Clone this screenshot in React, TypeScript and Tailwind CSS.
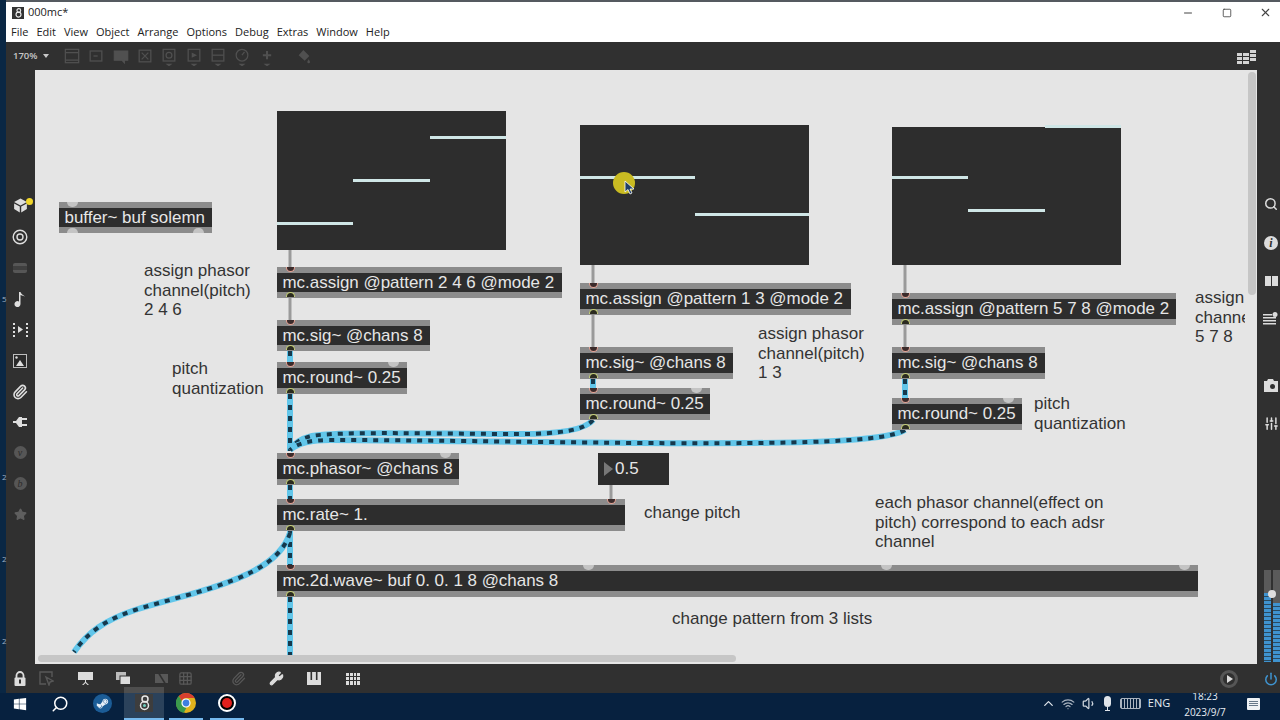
import React from "react";
import {
  ChevronUp,
  Grid3x3,
  Minus,
  Paperclip,
  Power,
  Search,
  SlidersVertical,
  Square,
  Star,
  Volume1,
  Wifi,
  Wrench,
  X,
} from "lucide-react";
import { FaSteamSymbol, FaWindows } from "react-icons/fa";

const sans = "font-['Liberation_Sans',Arial,sans-serif]";

// patcher box with inlet / outlet bars
function Box({
  pos,
  text,
  inlet = true,
  outlet = true,
  bumps,
}: {
  pos: string;
  text: string;
  inlet?: boolean;
  outlet?: boolean;
  bumps?: React.ReactNode;
}) {
  return (
    <div className={`absolute ${pos} flex flex-col bg-[#8c8c8c]`}>
      <div className="h-[6px] shrink-0" />
      <div className="flex-1 bg-[#2d2d2d] pl-[5.5px] text-[16.95px] leading-[19px] whitespace-nowrap text-[#e6e6e6]">
        {text}
      </div>
      <div className="h-[6px] shrink-0" />
      {inlet && (
        <div className="absolute left-[9px] top-0 h-[5px] w-[9px] rounded-b-full border border-t-0 border-[#e6a496] bg-[#3b2b2b]" />
      )}
      {outlet && (
        <div className="absolute bottom-px left-[9px] h-[5px] w-[9px] rounded-t-full border border-b-0 border-[#c5cf78] bg-[#2b2b20]" />
      )}
      {bumps}
    </div>
  );
}

function Note({ pos, lines }: { pos: string; lines: string[] }) {
  return (
    <div className={`absolute ${pos} overflow-hidden text-[17px] leading-[19.5px] whitespace-nowrap text-[#333333]`}>
      {lines.map((l) => (
        <div key={l}>{l}</div>
      ))}
    </div>
  );
}

function Level({ pos }: { pos: string }) {
  return <div className={`absolute h-[3px] bg-[#cfe6e6] ${pos}`} />;
}

function Panel({ pos, children }: { pos: string; children: React.ReactNode }) {
  return <div className={`absolute bg-[#2d2d2d] ${pos}`}>{children}</div>;
}

const grayCords = [
  "M290 250V267",
  "M290 298V320",
  "M593 265V283",
  "M593 315V347",
  "M905 265V293",
  "M905 325V347",
  "M611 485V499",
];

const mcCords = [
  "M290 351V362",
  "M290 394V451",
  "M593 379V388",
  "M905 379V398",
  "M290 485V499",
  "M290 531V565",
  "M290 597V655",
  "M593 420C585 430 560 434 520 434C440 434 340 431 312 436C300 439 294 443 290 450",
  "M905 430C885 442 800 444 640 443C520 442 420 440 330 440C310 440 298 443 290 450",
  "M290 533C276 578 200 590 135 610C105 620 88 632 74 652",
];

function Cords() {
  return (
    <svg className="absolute inset-0" width="1222" height="594" viewBox="35 70 1222 594" fill="none">
      {grayCords.map((d) => (
        <path key={d} d={d} stroke="#9a9a9a" strokeWidth="3" />
      ))}
      {mcCords.map((d) => (
        <g key={d}>
          <path d={d} stroke="#62c6ea" strokeWidth="6" />
          <path d={d} stroke="#16384c" strokeWidth="4" strokeDasharray="5 6" />
        </g>
      ))}
    </svg>
  );
}

function Canvas() {
  const bump = "absolute h-[5px] w-[11px] bg-[#c4c4c4]";
  return (
    <div className={`relative flex-1 overflow-hidden bg-[#e5e5e5] ${sans}`}>
      <Cords />

      <Box
        pos="left-[24px] top-[132px] w-[153px] h-[31px]"
        text="buffer~ buf solemn"
        inlet={false}
        outlet={false}
        bumps={
          <>
            <div className={`${bump} left-[8px] top-0 rounded-b-full`} />
            <div className={`${bump} bottom-0 left-[8px] rounded-t-full`} />
            <div className={`${bump} bottom-0 left-[134px] rounded-t-full`} />
          </>
        }
      />

      <Panel pos="left-[242px] top-[41px] h-[139px] w-[229px]">
        <Level pos="left-[153px] top-[25px] w-[76px]" />
        <Level pos="left-[76px] top-[68px] w-[77px]" />
        <Level pos="left-0 top-[111px] w-[76px]" />
      </Panel>
      <Panel pos="left-[545px] top-[55px] h-[140px] w-[229px]">
        <Level pos="left-0 top-[51px] w-[115px]" />
        <Level pos="left-[115px] top-[88px] w-[114px]" />
      </Panel>
      <Panel pos="left-[857px] top-[57px] h-[138px] w-[229px]">
        <Level pos="left-0 top-[49px] w-[76px]" />
        <Level pos="left-[76px] top-[82px] w-[77px]" />
        <Level pos="left-[153px] top-[-2px] w-[76px]" />
      </Panel>

      <Box pos="left-[242px] top-[197px] w-[285px] h-[31px]" text="mc.assign @pattern 2 4 6 @mode 2" />
      <Box pos="left-[242px] top-[250px] w-[153px] h-[31px]" text="mc.sig~ @chans 8" />
      <Box
        pos="left-[242px] top-[292px] w-[130px] h-[32px]"
        text="mc.round~ 0.25"
        bumps={<div className={`${bump} left-[111px] top-0 rounded-b-full`} />}
      />

      <Box pos="left-[545px] top-[213px] w-[271px] h-[32px]" text="mc.assign @pattern 1 3 @mode 2" />
      <Box pos="left-[545px] top-[277px] w-[153px] h-[32px]" text="mc.sig~ @chans 8" />
      <Box
        pos="left-[545px] top-[318px] w-[130px] h-[32px]"
        text="mc.round~ 0.25"
        bumps={<div className={`${bump} left-[111px] top-0 rounded-b-full`} />}
      />

      <Box pos="left-[857px] top-[223px] w-[284px] h-[32px]" text="mc.assign @pattern 5 7 8 @mode 2" />
      <Box pos="left-[857px] top-[277px] w-[153px] h-[32px]" text="mc.sig~ @chans 8" />
      <Box
        pos="left-[857px] top-[328px] w-[130px] h-[32px]"
        text="mc.round~ 0.25"
        bumps={<div className={`${bump} left-[111px] top-0 rounded-b-full`} />}
      />

      <Box
        pos="left-[242px] top-[383px] w-[182px] h-[32px]"
        text="mc.phasor~ @chans 8"
        bumps={<div className={`${bump} left-[163px] top-0 rounded-b-full`} />}
      />

      <div className="absolute left-[563px] top-[383px] flex h-[32px] w-[71px] items-center gap-[2px] bg-[#2d2d2d] pl-[6px] text-[17px] text-[#e6e6e6]">
        <div className="h-0 w-0 border-y-[7px] border-l-[9px] border-y-transparent border-l-[#777777]" />
        0.5
      </div>

      <Box
        pos="left-[242px] top-[429px] w-[348px] h-[32px]"
        text="mc.rate~ 1."
        bumps={
          <div className="absolute left-[330px] top-0 h-[5px] w-[9px] rounded-b-full border border-t-0 border-[#e6a496] bg-[#3b2b2b]" />
        }
      />
      <Box
        pos="left-[242px] top-[495px] w-[921px] h-[32px]"
        text="mc.2d.wave~ buf 0. 0. 1 8 @chans 8"
        bumps={
          <>
            <div className={`${bump} left-[306px] top-0 rounded-b-full`} />
            <div className={`${bump} left-[604px] top-0 rounded-b-full`} />
            <div className={`${bump} left-[902px] top-0 rounded-b-full`} />
          </>
        }
      />

      <Note pos="left-[109px] top-[191px]" lines={["assign phasor", "channel(pitch)", "2 4 6"]} />
      <Note pos="left-[137px] top-[289px]" lines={["pitch", "quantization"]} />
      <Note pos="left-[723px] top-[254px]" lines={["assign phasor", "channel(pitch)", "1 3"]} />
      <Note pos="left-[999px] top-[324px]" lines={["pitch", "quantization"]} />
      <Note
        pos="left-[840px] top-[423px]"
        lines={["each phasor channel(effect on", "pitch) correspond to each adsr", "channel"]}
      />
      <Note pos="left-[609px] top-[433px]" lines={["change pitch"]} />
      <Note pos="left-[637px] top-[539px]" lines={["change pattern from 3 lists"]} />
      <Note pos="left-[1160px] top-[218px] w-[50px]" lines={["assign phasor", "channel(pitch)", "5 7 8"]} />

      {/* mouse highlight */}
      <div className="absolute left-[578px] top-[102px] h-[22px] w-[22px] rounded-full bg-[#c9bb22]" />
      <svg className="absolute left-[589px] top-[110px]" width="11" height="16" viewBox="0 0 11 16">
        <path d="M1 1v11l3-2.500 2 4.500 2-1-2-4h4z" fill="#1f3f66" stroke="#ffffff" strokeWidth="0.8" />
      </svg>

      {/* scrollbars */}
      <div className="absolute right-[1px] top-[2px] h-[223px] w-[8px] rounded-full bg-[#c6c6c6]" />
      <div className="absolute bottom-[2px] left-[3px] h-[7px] w-[698px] rounded-full bg-[#c6c6c6]" />
    </div>
  );
}

function TopToolbar() {
  const dim = "#505050";
  const icons = [
    <g key="a"><rect x="4" y="4" width="16" height="16" /><path d="M4 8h16M4 17h16" /></g>,
    <g key="b"><rect x="5" y="6" width="14" height="12" /><path d="M9 12h5" /></g>,
    <path key="c" d="M4 6h16v11h-4v3l-3-3H4z" fill={dim} />,
    <g key="d"><rect x="5" y="5" width="14" height="14" /><path d="M8 8l8 8M16 8l-8 8" /></g>,
    <g key="e"><rect x="5" y="4" width="14" height="14" /><circle cx="12" cy="11" r="3.500" /><path d="M10 22h4l-2 1.500z" fill={dim} /></g>,
    <g key="f"><rect x="5" y="4" width="14" height="14" /><path d="M10 9l4 2-4 2z" fill={dim} /><path d="M10 22h4l-2 1.500z" fill={dim} /></g>,
    <g key="g"><rect x="5" y="4" width="14" height="14" /><path d="M5 11h14" /><path d="M10 22h4l-2 1.500z" fill={dim} /></g>,
    <g key="h"><circle cx="12" cy="11" r="7" /><path d="M12 11l3-4" /><path d="M10 22h4l-2 1.500z" fill={dim} /></g>,
    <g key="i"><path d="M12 6v10M7 11h10" strokeWidth="2.500" /><path d="M10 22h4l-2 1.500z" fill={dim} /></g>,
  ];
  return (
    <div className="flex h-[28px] shrink-0 items-center bg-[#303030]">
      <div className="flex w-[54px] items-center gap-[5px] pl-[7px] font-['Open_Sans',sans-serif] text-[9.5px] font-semibold text-[#c8c8c8]">
        170%
        <div className="h-0 w-0 border-x-[3px] border-t-[4px] border-x-transparent border-t-[#c8c8c8]" />
      </div>
      {icons.map((ic, i) => (
        <div key={i} className="flex w-[24.3px] justify-center">
          <svg width="20" height="20" viewBox="0 0 24 24" fill="none" stroke={dim} strokeWidth="1.500">
            {ic}
          </svg>
        </div>
      ))}
      <svg className="ml-[17px]" width="16" height="16" viewBox="0 0 24 24" fill={dim}>
        <path d="M11 3l9 9-7 7-9-8zM19 17c1 2 2 3 2 4a2 2 0 0 1-4 0c0-1 1-2 2-4z" />
      </svg>
      <svg className="ml-auto mr-[24px]" width="19" height="15" viewBox="0 0 19 15" fill="#d4d4d4">
        <path d="M0 4h5v3H0zM6 4h6v3H6zM13 1h6v3h-6zM13 5h6v3h-6zM0 8h5v3H0zM6 8h6v3H6zM13 9h6v3h-6zM0 12h5v3H0zM6 12h6v3H6z" />
      </svg>
    </div>
  );
}

function LeftBar() {
  const on = "#dedede";
  const off = "#5f5f5f";
  return (
    <div className="flex w-[29px] shrink-0 flex-col items-center bg-[#303030] pt-[120px] pr-px">
      <div className="relative flex h-[31px] items-center">
        <svg width="17" height="17" viewBox="0 0 24 24" fill={on}>
          <path d="M12 2l9 5-9 5-9-5zM3 9l8 4.500V22l-8-5zM21 9l-8 4.500V22l8-5z" />
        </svg>
        <div className="absolute right-[-4px] top-[8px] h-[7px] w-[7px] rounded-full bg-[#f0d52a]" />
      </div>
      <div className="flex h-[31px] items-center">
        <svg width="16" height="16" viewBox="0 0 16 16" fill="none" stroke={on}>
          <circle cx="8" cy="8" r="6.800" strokeWidth="1.400" />
          <circle cx="8" cy="8" r="3" strokeWidth="1.400" />
        </svg>
      </div>
      <div className="flex h-[31px] items-center">
        <div className="h-[10px] w-[14px] rounded-[2px] border-y-[3px] border-[#565656] bg-[#3f3f3f]" />
      </div>
      <div className="flex h-[31px] items-center">
        <svg width="14" height="16" viewBox="0 0 14 16" fill={on}>
          <path d="M6 1h1.500c.3 2 3 3 4.500 4.500-1.500-.7-3-1-4.500-1.500V13a3 3 0 1 1-1.500-2.500z" />
        </svg>
      </div>
      <div className="flex h-[31px] items-center">
        <svg width="15" height="15" viewBox="0 0 15 15" fill={on}>
          <path d="M5 4l5 3.500L5 11z" />
          <path d="M0 1h2v2H0zM0 5h2v2H0zM0 9h2v2H0zM0 13h2v2H0zM13 1h2v2h-2zM13 5h2v2h-2zM13 9h2v2h-2zM13 13h2v2h-2z" />
        </svg>
      </div>
      <div className="flex h-[31px] items-center">
        <svg width="14" height="14" viewBox="0 0 14 14">
          <rect x="0.500" y="0.500" width="13" height="13" fill="#2a2a2a" stroke="#bdbdbd" />
          <path d="M3 12l4-6 4 6z" fill={on} />
          <circle cx="3.500" cy="3.500" r="1.200" fill={on} />
        </svg>
      </div>
      <div className="flex h-[31px] items-center">
        <Paperclip size={16} color={on} strokeWidth={2.4} />
      </div>
      <div className="flex h-[30px] items-center">
        <svg width="15" height="14" viewBox="0 0 15 14" fill={on}>
          <path d="M0 6h3l3-4h3v10H6L3 8H0z" />
          <path d="M9 3h5v2H9zM9 9h5v2H9z" />
        </svg>
      </div>
      <div className="flex h-[31px] items-center">
        <div className="flex h-[13px] w-[13px] items-center justify-center rounded-full bg-[#565656] font-['Liberation_Serif',serif] text-[10px] italic leading-none text-[#2b2b2b]">
          v
        </div>
      </div>
      <div className="flex h-[31px] items-center">
        <div className="flex h-[13px] w-[13px] items-center justify-center rounded-full bg-[#565656] font-['Liberation_Serif',serif] text-[10px] italic leading-none text-[#2b2b2b]">
          b
        </div>
      </div>
      <div className="flex h-[31px] items-center">
        <Star size={13} color={off} fill={off} />
      </div>
    </div>
  );
}

function RightBar() {
  const on = "#dcdcdc";
  return (
    <div className="relative flex w-[23px] shrink-0 flex-col items-center bg-[#303030] pt-[126px] pl-[5px]">
      <Search size={14} color={on} strokeWidth={2.6} className="mt-[1px]" />
      <div className="mt-[25px] flex h-[14px] w-[14px] items-center justify-center rounded-full bg-[#dcdcdc] font-['Liberation_Serif',serif] text-[12px] font-bold italic leading-none text-[#303030]">
        i
      </div>
      <div className="mt-[26px] flex gap-[1px]">
        <div className="h-[10px] w-[6px] bg-[#dcdcdc]" />
        <div className="h-[10px] w-[6px] bg-[#dcdcdc]" />
      </div>
      <svg className="mt-[26px]" width="16" height="14" viewBox="0 0 16 14" fill={on}>
        <path d="M0 2h9v1.500H0zM0 5h13v1.500H0zM0 8h13v1.500H0zM0 11h13v1.500H0z" />
        <circle cx="12" cy="2.500" r="2.500" />
      </svg>
      <svg className="mt-[53px]" width="14" height="13" viewBox="0 0 14 13">
        <path d="M0 2h3l1-2h5l1 2h4v11H0z" fill={on} />
        <circle cx="8.500" cy="7.500" r="2.500" fill="#303030" />
      </svg>
      <SlidersVertical size={15} color={on} strokeWidth={2.4} className="mt-[24px]" />

      {/* output meters */}
      <div className="absolute bottom-[2px] left-[7px] flex h-[92px] gap-[2px]">
        <div className="flex w-[7px] flex-col bg-[#5a5a5a]">
          <div className="mt-[23px] h-[69px] bg-[repeating-linear-gradient(#3f93cf_0_3px,#2a4a60_3px_4px)]" />
        </div>
        <div className="flex w-[7px] flex-col bg-[#5a5a5a]">
          <div className="mt-[33px] h-[59px] bg-[repeating-linear-gradient(#3f93cf_0_3px,#2a4a60_3px_4px)]" />
        </div>
      </div>
      <div className="absolute bottom-[66px] left-[11px] h-[8px] w-[8px] rounded-full bg-[#dedede]" />
    </div>
  );
}

function BottomToolbar() {
  const on = "#dcdcdc";
  const off = "#585858";
  return (
    <div className="flex h-[29px] shrink-0 items-center bg-[#303030] pl-[7px]">
      <svg width="14" height="15" viewBox="0 0 14 15">
        <path d="M3.500 7V4.500a3.500 3.500 0 0 1 7 0V7" fill="none" stroke={on} strokeWidth="1.800" />
        <rect x="1.500" y="6.500" width="11" height="8.500" rx="1" fill={on} />
        <rect x="6" y="8.500" width="2" height="4" fill="#303030" />
      </svg>
      <svg className="ml-[12px]" width="15" height="15" viewBox="0 0 15 15" fill="none" stroke={off} strokeWidth="1.400">
        <path d="M13 6V1H1v12h6M7 6l7 4-3 1-1 3z" />
      </svg>
      <svg className="ml-[24px]" width="15" height="15" viewBox="0 0 15 15" fill={on}>
        <path d="M0 1h15v8H0zM7 9h1v2l3 3h-1.500L7.500 12 5.500 14H4l3-3z" />
      </svg>
      <svg className="ml-[23px]" width="15" height="13" viewBox="0 0 15 13">
        <rect x="0" y="0" width="10" height="8" fill="#bcbcbc" />
        <rect x="4" y="4" width="10.500" height="8.500" fill={on} stroke="#303030" />
      </svg>
      <svg className="ml-[23px]" width="15" height="15" viewBox="0 0 15 15" fill={off}>
        <path d="M1 3h13v9H1z" />
        <path d="M4 1l8 13" stroke="#303030" strokeWidth="1.500" />
      </svg>
      <Grid3x3 size={15} color={off} className="ml-[9px]" />
      <Paperclip size={15} color={off} className="ml-[38px]" />
      <Wrench size={15} color={on} fill={on} className="ml-[23px]" />
      <svg className="ml-[23px]" width="14" height="13" viewBox="0 0 14 13" fill={on}>
        <path d="M0 0h14v13H0z" />
        <path d="M3.500 0h1.600v8H3.500zM8.900 0h1.600v8H8.900z" fill="#303030" />
      </svg>
      <div className="ml-[25px] grid h-[12px] w-[14px] grid-cols-4 gap-[1px]">
        {[0, 1, 2, 3, 4, 5, 6, 7, 8, 9, 10, 11].map((i) => (
          <div key={i} className="bg-[#dcdcdc]" />
        ))}
      </div>
      <div className="ml-auto flex items-center gap-[26px] pr-[2px]">
        <div className="flex h-[18px] w-[18px] items-center justify-center rounded-full border-[3px] border-[#565656]">
          <div className="ml-px h-0 w-0 border-y-[4px] border-l-[6px] border-y-transparent border-l-[#dcdcdc]" />
        </div>
        <Power size={14} color="#3f93cf" strokeWidth={2.6} />
      </div>
    </div>
  );
}

function Taskbar() {
  const tile = "flex h-[27px] items-center justify-center pb-[6px]";
  return (
    <div className="flex h-[27px] shrink-0 items-center bg-[#07213f] font-['Open_Sans',sans-serif] text-[#e8edf2]">
      <div className={`${tile} w-[40px]`}>
        <FaWindows size={14} color="#ffffff" />
      </div>
      <div className={`${tile} w-[40px]`}>
        <Search size={18} color="#ffffff" strokeWidth={2} className="-scale-x-100" />
      </div>
      <div className={`${tile} w-[44px]`}>
        <div className="flex h-[19px] w-[19px] items-center justify-center rounded-full bg-[#1b5c96]">
          <FaSteamSymbol size={13} color="#e8f0f8" />
        </div>
      </div>
      {/* active app tile runs up over the window */}
      <div className="relative -mt-[6px] flex h-[33px] w-[40px] items-start justify-center border-b-2 border-[#76b9ed] bg-white/15 pt-[7px]">
        <div className="flex h-[18px] w-[18px] items-center justify-center bg-[#3d3d3d]">
          <svg width="11" height="16" viewBox="0 0 11 16" fill="none" stroke="#e8e8e8" strokeWidth="1.500">
            <circle cx="5.500" cy="10.500" r="4" />
            <circle cx="6" cy="4" r="3" />
            <circle cx="5.500" cy="10.500" r="1.500" fill="#6fd0c0" stroke="none" />
          </svg>
        </div>
      </div>
      <div className={`${tile} ml-[5px] w-[34px] border-b-2 border-[#76b9ed]`}>
        <svg width="20" height="20" viewBox="0 0 20 20">
          <circle cx="10" cy="10" r="10" fill="#e0b21c" />
          <path d="M10 0a10 10 0 0 1 8.700 5H10a5 5 0 0 0-4.500 2.700L2.800 3A10 10 0 0 1 10 0z" fill="#d8402f" />
          <path d="M2.800 3l4 7a5 5 0 0 0 3.500 5l-2.500 4.800A10 10 0 0 1 2.800 3z" fill="#3a9a4c" />
          <circle cx="10" cy="10" r="4" fill="#3f7fe0" stroke="#ffffff" strokeWidth="1.200" />
        </svg>
      </div>
      <div className={`${tile} ml-[7px] w-[34px] border-b-2 border-[#76b9ed]`}>
        <div className="flex h-[18px] w-[18px] items-center justify-center rounded-full border-2 border-white bg-black">
          <div className="h-[10px] w-[10px] rounded-full bg-[#e0201c]" />
        </div>
      </div>

      <div className="ml-auto flex items-center pb-[6px]">
        <ChevronUp size={15} color="#e0e6ec" className="mr-[5px]" />
        <Wifi size={14} color="#aab4c0" className="mr-[7px]" />
        <Volume1 size={15} color="#cfd6de" className="mr-[6px]" />
        <svg className="mr-[8px]" width="9" height="16" viewBox="0 0 9 16" fill="#dfe4ea">
          <rect x="1" y="0" width="7" height="11" rx="3.500" />
          <path d="M4 11h1v3h2v1H2v-1h2z" />
        </svg>
        <div className="mr-[3px] h-[11px] w-[21px] rounded-[2px] border border-[#aab4c0] bg-[repeating-linear-gradient(90deg,#aab4c0_0_1px,transparent_1px_3px)]" />
        <div className="w-[30px] text-center text-[11px]">ENG</div>
        <div className="mr-[11px] flex w-[62px] flex-col items-center text-[10px] leading-[16px]">
          <div>18:23</div>
          <div>2023/9/7</div>
        </div>
        <div className="mr-[20px] flex h-[12px] w-[13px] flex-col justify-center gap-px rounded-[1px] bg-[#eef1f4] px-[2px]">
          <div className="h-px bg-[#667788]" />
          <div className="h-px bg-[#667788]" />
          <div className="h-px bg-[#667788]" />
        </div>
      </div>
    </div>
  );
}

export default function App() {
  return (
    <div className="flex h-[720px] w-[1280px] flex-col overflow-hidden bg-[#07213f]">
      <div className="relative flex min-h-0 flex-1">
        {/* sliver of the desktop behind the window */}
        <div className="relative w-[6px] shrink-0 bg-[#0a2744] font-['Open_Sans',sans-serif] text-[8px] leading-none text-[#9fb0c2]">
          <span className="absolute left-[2px] top-[295px]">5</span>
          <span className="absolute left-[2px] top-[473px]">2</span>
          <span className="absolute left-[2px] top-[555px]">2</span>
          <span className="absolute left-[2px] top-[637px]">2</span>
        </div>
        <div className="flex min-w-0 flex-1 flex-col">
          <div className="h-[2px] shrink-0 bg-[#555a60]" />
          <div className="flex h-[21px] shrink-0 items-center bg-white pl-[6px] font-['Open_Sans',sans-serif] text-[11px] text-[#222222]">
            <div className="mr-[4px] flex h-[12px] w-[12px] items-center justify-center bg-[#333333]">
              <svg width="7" height="10" viewBox="0 0 11 16" fill="none" stroke="#eeeeee" strokeWidth="1.800">
                <circle cx="5.500" cy="10.500" r="4" />
                <circle cx="6" cy="4" r="3" />
              </svg>
            </div>
            000mc*
            <div className="ml-auto mr-[-5px] flex items-center">
              <div className="flex w-[39px] justify-center">
                <Minus size={12} color="#444444" />
              </div>
              <div className="flex w-[39px] justify-center">
                <Square size={10} color="#444444" />
              </div>
              <div className="flex w-[39px] justify-center">
                <X size={13} color="#444444" />
              </div>
            </div>
          </div>
          <div className="flex h-[19px] shrink-0 items-center gap-[8px] bg-white pl-[5px] font-['Open_Sans',sans-serif] text-[11px] text-[#222222]">
            {["File", "Edit", "View", "Object", "Arrange", "Options", "Debug", "Extras", "Window", "Help"].map((m) => (
              <span key={m}>{m}</span>
            ))}
          </div>
          <TopToolbar />
          <div className="flex min-h-0 flex-1">
            <LeftBar />
            <Canvas />
            <RightBar />
          </div>
          <BottomToolbar />
        </div>
      </div>
      <Taskbar />
    </div>
  );
}
